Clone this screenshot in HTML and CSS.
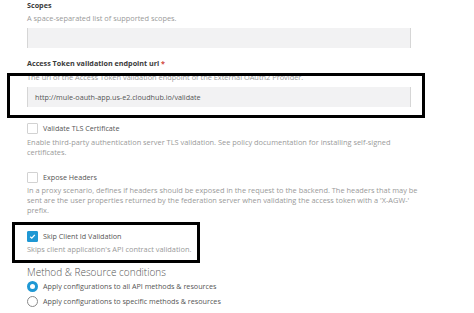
FILE: index.html
```html
<!DOCTYPE html>
<html>
<head>
<meta charset="utf-8">
<link rel="stylesheet" href="styles.css">
</head>
<body>
<div class="page">
  <div class="form">
    <div class="label lbl-scopes">Scopes</div>
    <div class="desc desc-scopes">A space-separated list of supported scopes.</div>
    <div class="input input-scopes"></div>

    <div class="label lbl-access">Access Token validation endpoint url <span class="req">*</span></div>
    <div class="desc desc-access">The url of the Access Token validation endpoint of the External OAuth2 Provider.</div>
    <div class="input input-access">http://mule-oauth-app.us-e2.cloudhub.io/validate</div>

    <div class="check-row row-tls"><span class="box"></span><span class="check-label">Validate TLS Certificate</span></div>
    <div class="desc desc-tls">Enable third-party authentication server TLS validation. See policy documentation for installing self-signed certificates.</div>

    <div class="check-row row-expose"><span class="box"></span><span class="check-label">Expose Headers</span></div>
    <div class="desc desc-expose">In a proxy scenario, defines if headers should be exposed in the request to the backend. The headers that may be sent are the user properties returned by the federation server when validating the access token with a 'X-AGW-' prefix.</div>

    <div class="check-row row-skip"><span class="box checked"><svg viewBox="0 0 11 11" width="11" height="11"><path d="M3.2 5.8 L4.8 7.2 L7.8 3.9" fill="none" stroke="#fff" stroke-width="1.3"/></svg></span><span class="check-label">Skip Client Id Validation</span></div>
    <div class="desc desc-skip">Skips client application's API contract validation.</div>

    <div class="section-title">Method &amp; Resource conditions</div>
    <div class="radio-row row-r1"><span class="radio on"></span><span class="check-label">Apply configurations to all API methods &amp; resources</span></div>
    <div class="radio-row row-r2"><span class="radio"></span><span class="check-label">Apply configurations to specific methods &amp; resources</span></div>
  </div>
  <div class="annot annot-access"></div>
  <div class="annot annot-skip"></div>
</div>
</body>
</html>
```
FILE: styles.css
```css
html, body {
  margin: 0;
  padding: 0;
  background: #fff;
}
body {
  font-family: "Open Sans", "Liberation Sans", sans-serif;
  width: 474px;
  height: 313px;
  overflow: hidden;
}
.page {
  position: relative;
  width: 474px;
  height: 313px;
}
.form {
  padding-left: 27px;
  width: 384px;
}
.label {
  font-size: 7.2px;
  font-weight: 700;
  color: #3a3a3a;
  line-height: 11px;
}
.req { color: #d0453a; }
.desc {
  font-size: 7.4px;
  color: #9a9a9a;
  line-height: 10px;
  width: 398px;
}
.input {
  height: 20px;
  background: #f2f2f3;
  border-left: 1px solid #d6d6d6;
  border-right: 1px solid #d6d6d6;
  box-sizing: border-box;
  font-size: 7.2px;
  color: #555;
  line-height: 20px;
  padding-left: 7px;
}
.desc-scopes { margin-top: 2px; }
.input-scopes { margin-top: 5px; }
.lbl-access { margin-top: 10px; }
.desc-access { margin-top: 3px; }
.input-access { margin-top: 5px; }

.check-row, .radio-row {
  display: flex;
  align-items: center;
  height: 12px;
}
.box {
  width: 11px;
  height: 11px;
  box-sizing: border-box;
  border: 1px solid #d2d2d2;
  background: #fff;
  border-radius: 1px;
  margin-right: 5px;
  flex: none;
  display: flex;
}
.box.checked {
  background: #1f98d4;
  border-color: #1f98d4;
}
.box svg { display: block; margin: -1px; }
.check-label {
  font-size: 7.2px;
  color: #555;
  line-height: 12px;
}
.row-tls { margin-top: 15px; }
.desc-tls { margin-top: 3px; }
.row-expose { margin-top: 14px; }
.desc-expose { margin-top: 2px; }
.row-skip { margin-top: 15px; }
.desc-skip { margin-top: 2px; }

.section-title {
  font-size: 10px;
  font-weight: 300;
  color: #555;
  line-height: 14px;
  margin-top: 11px;
}
.radio {
  width: 11px;
  height: 11px;
  box-sizing: border-box;
  border-radius: 50%;
  border: 1px solid #8a8a8a;
  background: #fff;
  margin-right: 5px;
  flex: none;
}
.radio.on {
  border: 3px solid #1f98d4;
}
.row-r1 { margin-top: 1px; }
.row-r2 { margin-top: 3px; }

.annot {
  position: absolute;
  border: 3px solid #000;
  box-sizing: border-box;
}
.annot-access {
  left: 7px;
  top: 73px;
  width: 418px;
  height: 45px;
}
.annot-skip {
  left: 12px;
  top: 222px;
  width: 188px;
  height: 41px;
}
```
